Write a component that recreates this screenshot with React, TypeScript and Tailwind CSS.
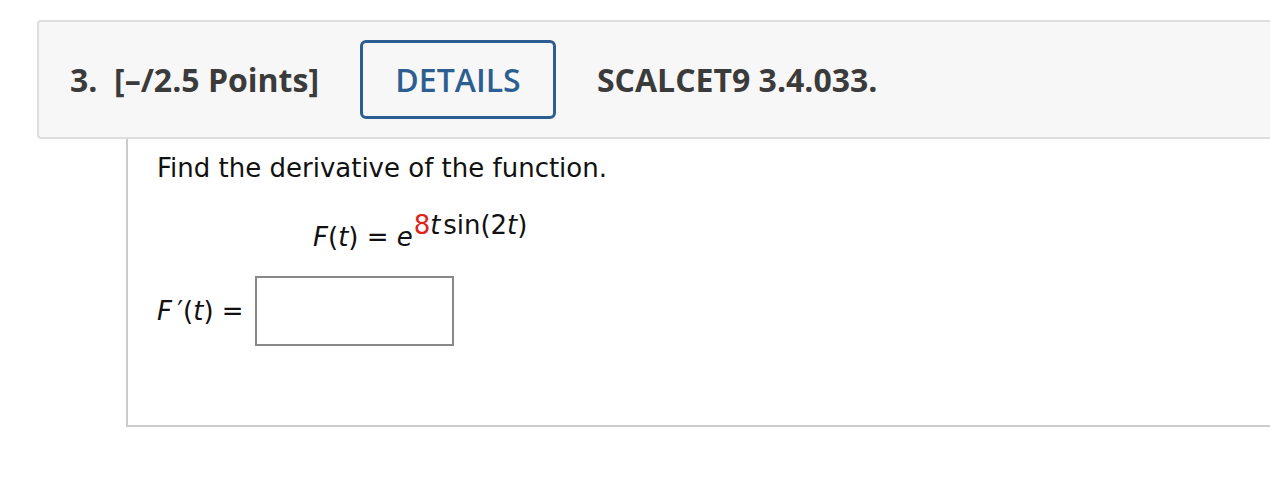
export default function App() {
  return (
    <div className="w-[1270px] h-[482px] overflow-hidden bg-white pt-[20px]">
      <div className="ml-[37px] h-[119px] flex items-center bg-[#f7f7f7] border-2 border-r-0 border-[#dedede] rounded-l-[4px] pl-[31px] font-['Open_Sans',sans-serif] text-[#3b3b3b]">
        <span className="text-[32px] font-bold">3.&nbsp; [–/2.5 Points]</span>
        <button className="ml-[41px] w-[196px] h-[79px] border-[3px] border-[#2c5e92] rounded-[6px] text-[32px] font-semibold text-[#2c5e92]">
          DETAILS
        </button>
        <span className="ml-[41px] text-[32px] font-bold">SCALCET9 3.4.033.</span>
      </div>
      <div className="ml-[126px] h-[288px] border-l-2 border-b-2 border-[#cccccc] pl-[29px] pt-[14px] font-['DejaVu_Sans',sans-serif] text-[#111] text-[26px]">
        <p className="leading-[30px]">Find the derivative of the function.</p>
        <div className="mt-[27px] ml-[156px] flex items-end leading-[30px]">
          <span>
            <i>F</i>(<i>t</i>) = <i>e</i>
          </span>
          <span className="mb-[12px] ml-[1px]">
            <span className="text-[#e0241b]">8</span>
            <i>t</i>&#8202;sin(2<i>t</i>)
          </span>
        </div>
        <div className="mt-[24px] flex items-center">
          <span>
            <i>F</i>&#8201;′(<i>t</i>) =
          </span>
          <div className="ml-[11px] w-[199px] h-[70px] border-2 border-[#888888] bg-white" />
        </div>
      </div>
    </div>
  );
}
